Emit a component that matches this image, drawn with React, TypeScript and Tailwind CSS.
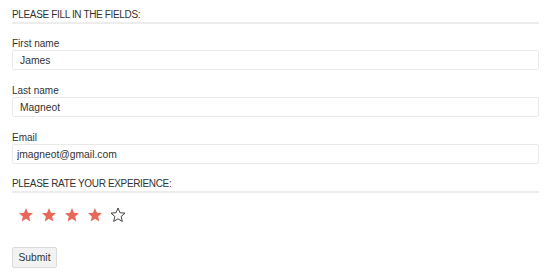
import { useState } from "react";

const fields = [
  { id: "first", label: "First name", value: "James", pad: "px-[7px]" },
  { id: "last", label: "Last name", value: "Magneot", pad: "px-[7px]" },
  { id: "email", label: "Email", value: "jmagneot@gmail.com", pad: "px-[4px]" },
];

const Star = ({ filled }: { filled: boolean }) => (
  <svg width="14" height="14" viewBox="1.5 1.5 21 21" className="block">
    <polygon
      points="12,1.5 14.9,8.6 22.5,9.2 16.7,14.2 18.5,21.7 12,17.7 5.5,21.7 7.3,14.2 1.5,9.2 9.1,8.6"
      fill={filled ? "#e8685a" : "none"}
      stroke={filled ? "none" : "#444"}
      strokeWidth={filled ? 0 : 1.5}
      strokeLinejoin="round"
    />
  </svg>
);

const SectionTitle = ({ children }: { children: string }) => (
  <div className="border-b-2 border-[#ececec] text-[10px] leading-[14px] tracking-[-0.35px] text-[#333] uppercase">
    {children}
  </div>
);

export default function App() {
  const [values, setValues] = useState(fields.map((f) => f.value));
  const [rating, setRating] = useState(4);

  return (
    <div className="min-h-[280px] bg-white px-3 pt-2 font-['Liberation_Sans',Arial,sans-serif] text-[#333]">
      <SectionTitle>Please fill in the fields:</SectionTitle>

      {fields.map((f, i) => (
        <div key={f.id} className={i === 0 ? "mt-[14px]" : "mt-[15px]"}>
          <label htmlFor={f.id} className="block text-[10px] leading-[12px]">
            {f.label}
          </label>
          <input
            id={f.id}
            value={values[i]}
            onChange={(e) => setValues(values.map((v, j) => (j === i ? e.target.value : v)))}
            className={`block h-5 w-full rounded-[2px] border border-[#eaeaea] ${f.pad} text-[10.3px] text-[#333] outline-none`}
          />
        </div>
      ))}

      <div className="mt-[13px]">
        <SectionTitle>Please rate your experience:</SectionTitle>
      </div>

      {/* rating */}
      <div className="mt-[15px] flex gap-[9px] pl-[7px]">
        {[1, 2, 3, 4, 5].map((n) => (
          <button key={n} type="button" onClick={() => setRating(n)} className="cursor-pointer">
            <Star filled={n <= rating} />
          </button>
        ))}
      </div>

      <button
        type="button"
        className="mt-[25px] h-[21px] w-[45px] rounded-[2px] border border-[#dcdcdc] bg-[#f2f2f2] text-[10.3px] text-[#333]"
      >
        Submit
      </button>
    </div>
  );
}
